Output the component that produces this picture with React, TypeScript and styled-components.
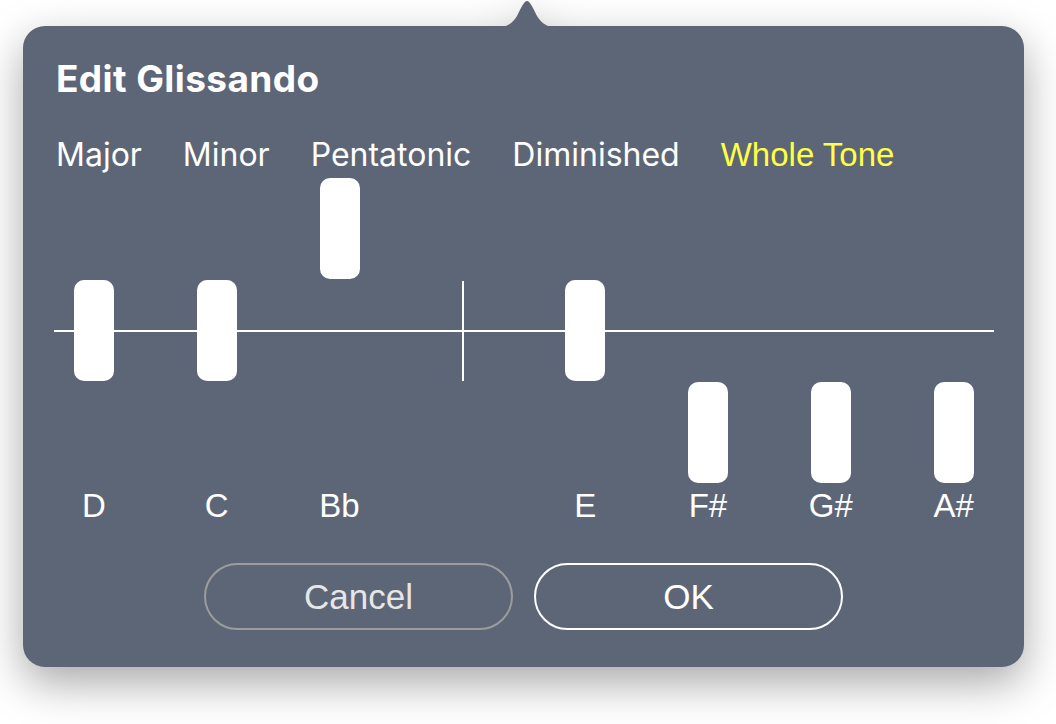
import styled, { createGlobalStyle } from 'styled-components';

const GlobalStyle = createGlobalStyle`
    body {
        margin: 0;
        background: #ffffff;
        font-family: "Inter", "Liberation Sans", sans-serif;
    }
    * {
        box-sizing: border-box;
    }
`;

type Note = {
    name: string;
    level: 'high' | 'mid' | 'low';
};

// column 4 (index 3) is the octave divider, it has no note
const notes: (Note | null)[] = [
    { name: 'D', level: 'mid' },
    { name: 'C', level: 'mid' },
    { name: 'Bb', level: 'high' },
    null,
    { name: 'E', level: 'mid' },
    { name: 'F#', level: 'low' },
    { name: 'G#', level: 'low' },
    { name: 'A#', level: 'low' },
];

const scales = ['Major', 'Minor', 'Pentatonic', 'Diminished', 'Whole Tone'];
const activeScale = 'Whole Tone';

const StyledPage = styled.div`
    width: 1056px;
    height: 724px;
    padding: 26px 0 0 23px;
`;

const StyledPopover = styled.div`
    position: relative;
    width: 1001px;
    filter: drop-shadow(0 16px 22px rgba(0, 0, 0, 0.34));
`;

const StyledArrow = styled.svg`
    position: absolute;
    left: 474px;
    top: -26px;
    display: block;
`;

const StyledPanel = styled.div`
    width: 1001px;
    height: 641px;
    border-radius: 22px;
    background-color: #5d6677;
    padding-top: 32px;
    display: flex;
    flex-direction: column;
`;

const StyledTitle = styled.h1`
    margin: 0 0 0 33px;
    font-family: "Inter", sans-serif;
    font-weight: 700;
    font-size: 37px;
    letter-spacing: 0.4px;
    line-height: 42px;
    color: #ffffff;
`;

const StyledTabs = styled.div`
    margin: 35px 0 0 33px;
    display: flex;
    align-items: baseline;
    gap: 41px;
`;

const StyledTab = styled.span<{ $active?: boolean }>`
    font-family: ${p => p.$active ? '"Liberation Sans", Arial, sans-serif' : '"Inter", sans-serif'};
    font-size: ${p => p.$active ? '33px' : '32px'};
    line-height: 40px;
    color: ${p => p.$active ? '#ffff45' : '#ffffff'};
    white-space: nowrap;
`;

const StyledKeyboard = styled.div`
    position: relative;
    margin: 3px 9px 0 9.5px;
    display: grid;
    grid-template-columns: repeat(8, 1fr);
    grid-template-rows: repeat(3, 102px);

    &::before {
        content: "";
        position: absolute;
        left: 21.5px;
        right: 21px;
        top: 152px;
        height: 2px;
        background: #ffffff;
    }
`;

const levelRow = { high: 1, mid: 2, low: 3 };

const StyledKey = styled.div<{ $row: number }>`
    position: relative;
    grid-row: ${p => p.$row};
    justify-self: center;
    width: 40px;
    height: 101px;
    border-radius: 10px;
    background: #ffffff;
`;

const StyledDivider = styled.div`
    grid-row: 2;
    justify-self: center;
    margin-top: 1px;
    width: 2px;
    height: 100px;
    background: #ffffff;
    transform: translateX(1px);
`;

const StyledLabels = styled.div`
    margin: 2px 9px 0 9.5px;
    display: grid;
    grid-template-columns: repeat(8, 1fr);
`;

const StyledLabel = styled.span`
    text-align: center;
    font-family: "Liberation Sans", Arial, sans-serif;
    font-size: 33px;
    line-height: 40px;
    color: #ffffff;
`;

const StyledButtons = styled.div`
    margin-top: 37px;
    display: flex;
    justify-content: center;
    gap: 21px;
`;

const StyledButton = styled.button<{ $primary?: boolean }>`
    width: 309px;
    height: 67px;
    border-radius: 34px;
    border: 2px solid ${p => p.$primary ? '#ffffff' : '#9c9c9c'};
    background: transparent;
    color: ${p => p.$primary ? '#ffffff' : '#e6e6e6'};
    font-family: "Liberation Sans", Arial, sans-serif;
    font-size: 35px;
    padding: 0;
    display: flex;
    align-items: center;
    justify-content: center;
`;

const App = () => {
    return (
        <StyledPage>
            <GlobalStyle />
            <StyledPopover>
                <StyledArrow width="60" height="27" viewBox="0 0 60 27">
                    <path
                        d="M0 27 C10 27 15 24 20 16 C24 8 27 1 30 1 C33 1 36 8 40 16 C45 24 50 27 60 27 Z"
                        fill="#5d6677"
                    />
                </StyledArrow>
                <StyledPanel>
                    <StyledTitle>Edit Glissando</StyledTitle>
                    <StyledTabs>
                        {scales.map(s => (
                            <StyledTab key={s} $active={s === activeScale}>{s}</StyledTab>
                        ))}
                    </StyledTabs>
                    <StyledKeyboard>
                        {notes.map((n, i) => n
                            ? <StyledKey key={i} $row={levelRow[n.level]} style={{ gridColumn: i + 1 }} />
                            : <StyledDivider key={i} style={{ gridColumn: i + 1 }} />
                        )}
                    </StyledKeyboard>
                    <StyledLabels>
                        {notes.map((n, i) => (
                            <StyledLabel key={i}>{n ? n.name : ''}</StyledLabel>
                        ))}
                    </StyledLabels>
                    <StyledButtons>
                        <StyledButton>Cancel</StyledButton>
                        <StyledButton $primary>OK</StyledButton>
                    </StyledButtons>
                </StyledPanel>
            </StyledPopover>
        </StyledPage>
    );
};

export default App;
